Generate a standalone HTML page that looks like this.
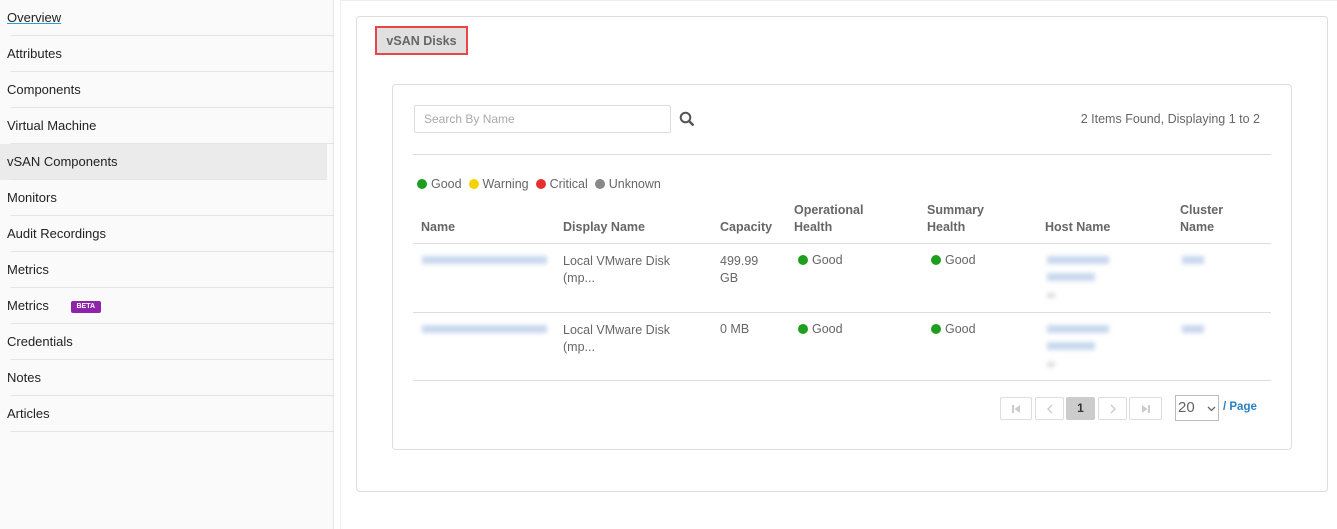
<!DOCTYPE html>
<html><head><style>
*{margin:0;padding:0;box-sizing:border-box}
body{width:1337px;height:529px;overflow:hidden;background:#fff;font-family:"Liberation Sans",sans-serif;font-size:13px;color:#333;position:relative}
.a{position:absolute;white-space:nowrap}
#side{position:absolute;left:0;top:0;width:334px;height:529px;background:#fafafa;border-right:1px solid #e6e6e6}
.it{position:absolute;left:0;width:333px;height:36px;line-height:36px;padding-left:7px;font-size:13px;color:#222}
.it:after{content:"";position:absolute;left:11px;right:0;bottom:0;border-bottom:1px solid #e4e4e4}
.g{color:#666}
.h{font-weight:bold;color:#666;font-size:12.5px;line-height:17px}
.dot{display:inline-block;width:10px;height:10px;border-radius:50%;vertical-align:-1px;margin-right:4px}
.blur{background:#c9d8ee;filter:blur(2px);height:8px;position:absolute}
.pb{position:absolute;top:397px;height:23px;border:1px solid #ddd;border-radius:2px;color:#ccc;text-align:center;line-height:21px;font-size:12px}
.pb svg{position:absolute;left:50%;top:50%;transform:translate(-50%,-50%)}
</style></head><body>
<div id="side">
<div class="it" style="top:0"><span style="text-decoration:underline;text-decoration-color:#2a9fd6">Overview</span></div>
<div class="it" style="top:36px">Attributes</div>
<div class="it" style="top:72px">Components</div>
<div class="it" style="top:108px">Virtual Machine</div>
<div class="it" style="top:144px;background:#ebebeb;width:327px">vSAN Components</div>
<div class="it" style="top:180px">Monitors</div>
<div class="it" style="top:216px">Audit Recordings</div>
<div class="it" style="top:252px">Metrics</div>
<div class="it" style="top:288px">Metrics <span style="display:inline-block;margin-left:18px;background:#8e24aa;color:#fff;font-size:7px;font-weight:bold;line-height:12px;padding:0 6px;border-radius:2px;vertical-align:2px">BETA</span></div>
<div class="it" style="top:324px">Credentials</div>
<div class="it" style="top:360px">Notes</div>
<div class="it" style="top:396px">Articles</div>
</div>
<div class="a" style="left:340px;top:0;width:997px;height:529px;border-left:1px solid #eee;border-top:1px solid #eee"></div>
<div class="a" style="left:356px;top:16px;width:972px;height:476px;border:1px solid #ddd;border-radius:4px"></div>
<div class="a" style="left:375px;top:26px;width:93px;height:29px;border:2px solid #e8464b;background:#e0e0e0;color:#666;font-weight:bold;font-size:12.5px;text-align:center;line-height:26px">vSAN Disks</div>
<div class="a" style="left:392px;top:84px;width:900px;height:366px;border:1px solid #ddd;border-radius:4px"></div>
<div class="a" style="left:414px;top:105px;width:257px;height:28px;border:1px solid #ddd;border-radius:2px;color:#aaa;font-size:12px;line-height:27px;padding-left:9px">Search By Name</div>
<svg class="a" style="left:679px;top:111px" width="16" height="16" viewBox="0 0 16 16"><circle cx="6.5" cy="6.5" r="4.8" fill="none" stroke="#555" stroke-width="2"/><path d="M10 10l4.5 4.5" stroke="#555" stroke-width="2.4"/></svg>
<div class="a g" style="right:77px;top:112px;font-size:12.5px">2 Items Found, Displaying 1 to 2</div>
<div class="a" style="left:413px;top:154px;width:858px;border-top:1px solid #ddd"></div>
<div class="a g" style="left:417px;top:177px;font-size:12.5px"><span class="dot" style="background:#1e9e1e"></span>Good &nbsp;<span class="dot" style="background:#f5d200"></span>Warning &nbsp;<span class="dot" style="background:#e53030"></span>Critical &nbsp;<span class="dot" style="background:#888"></span>Unknown</div>
<div class="a h" style="left:421px;top:219px">Name</div>
<div class="a h" style="left:563px;top:219px">Display Name</div>
<div class="a h" style="left:720px;top:219px">Capacity</div>
<div class="a h" style="left:794px;top:202px">Operational<br>Health</div>
<div class="a h" style="left:927px;top:202px">Summary<br>Health</div>
<div class="a h" style="left:1045px;top:219px">Host Name</div>
<div class="a h" style="left:1180px;top:202px">Cluster<br>Name</div>
<div class="a" style="left:413px;top:243px;width:858px;border-top:1px solid #ddd"></div>
<div class="a" style="left:413px;top:312px;width:858px;border-top:1px solid #ddd"></div>
<div class="a" style="left:413px;top:380px;width:858px;border-top:1px solid #ddd"></div>
<div class="blur" style="left:422px;top:256px;width:125px"></div>
<div class="blur" style="left:422px;top:325px;width:125px"></div>
<div class="blur" style="left:1047px;top:256px;width:62px"></div><div class="blur" style="left:1047px;top:273px;width:48px"></div><div class="blur" style="left:1047px;top:293px;width:8px;height:5px;background:#ddd"></div>
<div class="blur" style="left:1047px;top:325px;width:62px"></div><div class="blur" style="left:1047px;top:342px;width:48px"></div><div class="blur" style="left:1047px;top:362px;width:8px;height:5px;background:#ddd"></div>
<div class="blur" style="left:1182px;top:256px;width:22px"></div><div class="blur" style="left:1182px;top:325px;width:22px"></div>
<div class="a g" style="left:563px;top:253px;line-height:17px;font-size:12.5px">Local VMware Disk<br>(mp...</div>
<div class="a g" style="left:720px;top:253px;line-height:17px;font-size:12.5px">499.99<br>GB</div>
<div class="a g" style="left:798px;top:253px;font-size:12.5px"><span class="dot" style="background:#1e9e1e"></span>Good</div>
<div class="a g" style="left:931px;top:253px;font-size:12.5px"><span class="dot" style="background:#1e9e1e"></span>Good</div>
<div class="a g" style="left:563px;top:322px;line-height:17px;font-size:12.5px">Local VMware Disk<br>(mp...</div>
<div class="a g" style="left:720px;top:322px;font-size:12.5px">0 MB</div>
<div class="a g" style="left:798px;top:322px;font-size:12.5px"><span class="dot" style="background:#1e9e1e"></span>Good</div>
<div class="a g" style="left:931px;top:322px;font-size:12.5px"><span class="dot" style="background:#1e9e1e"></span>Good</div>
<div class="pb" style="left:1000px;width:32px"><svg width="10" height="10" viewBox="0 0 10 10"><rect x="1" y="1" width="2" height="8" fill="#ccc"/><path d="M9 1L3.5 5 9 9z" fill="#ccc"/></svg></div>
<div class="pb" style="left:1035px;width:29px"><svg width="8" height="10" viewBox="0 0 8 10"><path d="M6 1L2 5l4 4" fill="none" stroke="#ccc" stroke-width="1.4"/></svg></div>
<div class="pb" style="left:1066px;width:29px;background:#ccc;border-color:#ccc;color:#333;font-weight:bold">1</div>
<div class="pb" style="left:1098px;width:29px"><svg width="8" height="10" viewBox="0 0 8 10"><path d="M2 1l4 4-4 4" fill="none" stroke="#ccc" stroke-width="1.4"/></svg></div>
<div class="pb" style="left:1129px;width:33px"><svg width="10" height="10" viewBox="0 0 10 10"><rect x="7" y="1" width="2" height="8" fill="#ccc"/><path d="M1 1l5.5 4L1 9z" fill="#ccc"/></svg></div>
<div class="a" style="left:1175px;top:395px;width:44px;height:26px;border:1px solid #bbb;color:#666;font-size:15px;line-height:24px;padding-left:2px">20<svg style="position:absolute;left:31px;top:10px" width="9" height="6" viewBox="0 0 9 6"><path d="M1 1l3.5 3.5L8 1" fill="none" stroke="#666" stroke-width="1.3"/></svg></div>
<div class="a" style="left:1223px;top:401px;color:#2a7fc0;font-weight:bold;font-size:11.5px">/ Page</div>
</body></html>
